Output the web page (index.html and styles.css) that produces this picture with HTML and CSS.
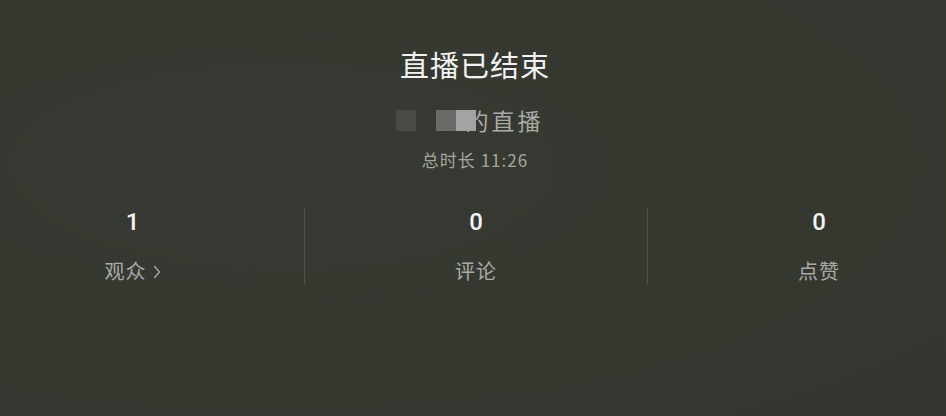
FILE: index.html
```html
<!DOCTYPE html>
<html lang="zh">
<head>
<meta charset="utf-8">
<link rel="stylesheet" href="styles.css">
</head>
<body>
<main class="page">
  <h1 class="title">直播已结束</h1>
  <div class="host">
    <span class="blk blk1"></span>
    <span class="blk blk2"></span>
    <span class="blk blk3"></span>
    <span class="host-text">的直播</span>
  </div>
  <div class="duration">总时长 11:26</div>
  <div class="stats">
    <div class="stat">
      <div class="num">1</div>
      <div class="label">观众<svg class="chev" width="8" height="14" viewBox="0 0 8 14"><polyline points="1.5,1.5 6.5,7 1.5,12.5" fill="none" stroke="#a9aaa7" stroke-width="1.4" stroke-linecap="round" stroke-linejoin="round"/></svg></div>
    </div>
    <div class="stat divided">
      <div class="num">0</div>
      <div class="label">评论</div>
    </div>
    <div class="stat divided">
      <div class="num">0</div>
      <div class="label">点赞</div>
    </div>
  </div>
</main>
</body>
</html>
```

FILE: styles.css
```css
html, body {
  margin: 0;
  padding: 0;
}
body {
  width: 946px;
  height: 416px;
  overflow: hidden;
  background: radial-gradient(ellipse at 30% 40%, #373a32 0%, #35382f 60%, #33362f 100%);
  font-family: "Noto Sans CJK SC", "Noto Sans", sans-serif;
  color: #fff;
}
.page {
  display: flex;
  flex-direction: column;
  align-items: center;
  padding-top: 44px;
  padding-left: 4px;
}
.title {
  margin: 0;
  font-size: 29px;
  font-weight: 400;
  line-height: 40px;
  color: #f2f2f2;
  letter-spacing: 1px;
}
.host {
  display: flex;
  align-items: center;
  margin-top: 21px;
  height: 30px;
  margin-right: 11px;
}
.blk {
  display: block;
  width: 20px;
  height: 21px;
}
.blk1 { background: #474a45; margin-right: 20px; }
.blk2 { background: #6a6b68; }
.blk3 { background: #a3a3a2; margin-right: -10px; position: relative; z-index: 1; }
.host-text {
  font-size: 23px;
  letter-spacing: 3px;
  line-height: 30px;
  color: #a9aaa7;
}
.duration {
  margin-top: 13px;
  font-size: 17px;
  letter-spacing: 1px;
  line-height: 24px;
  color: #a4a5a2;
}
.stats {
  align-self: flex-start;
  display: grid;
  grid-template-columns: repeat(3, 343px);
  margin-left: -43px;
  margin-top: 36px;
}
.stat {
  display: flex;
  flex-direction: column;
  align-items: center;
  height: 76px;
}
.divided {
  border-left: 1px solid #50534c;
}
.num {
  font-family: "Roboto", "Noto Sans", sans-serif;
  font-size: 24px;
  font-weight: 500;
  line-height: 28px;
  color: #f4f4f4;
}
.label {
  display: flex;
  align-items: center;
  margin-top: 22px;
  font-size: 20px;
  letter-spacing: 1px;
  line-height: 26px;
  color: #a9aaa7;
}
.chev {
  display: block;
  margin-left: 6px;
  margin-top: 1px;
}
```
